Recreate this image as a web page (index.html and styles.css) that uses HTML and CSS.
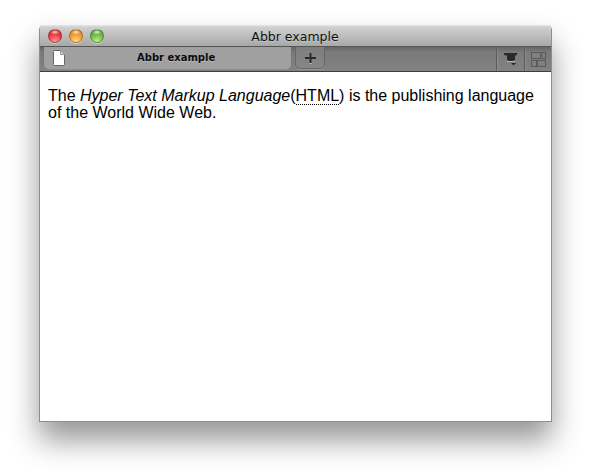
FILE: index.html
```html
<!DOCTYPE html>
<html lang="en">
<head>
<meta charset="utf-8">
<title>Abbr example</title>
<link rel="stylesheet" href="styles.css">
</head>
<body>
<div class="window">
  <header class="titlebar">
    <div class="lights">
      <span class="light red"></span>
      <span class="light yellow"></span>
      <span class="light green"></span>
    </div>
    <div class="title">Abbr example</div>
  </header>
  <nav class="tabbar">
    <div class="tab">
      <svg class="page-icon" width="12" height="16" viewBox="0 0 12 16"><path d="M1.500.5h6l4 4v10a1 1 0 0 1-1 1h-9a1 1 0 0 1-1-1V1.500a1 1 0 0 1 1-1z" fill="#fff" stroke="#666"/><path d="M7.500.5v4h4" fill="#d8d8d8" stroke="#999"/></svg>
      <span class="tab-label">Abbr example</span>
    </div>
    <div class="new-tab">
      <svg width="11" height="12" viewBox="0 0 11 12"><path d="M4.500 1h2v10h-2zM0 5h11v2H0z" fill="#2b2b2b"/><path d="M4.500 11h2v1h-2z" fill="#c4c4c4"/></svg>
    </div>
    <div class="spacer"></div>
    <div class="tool">
      <svg width="14" height="13" viewBox="0 0 14 13"><path d="M0 0h13v2l-2 .5V7l-2 1H5L3 7V2.500L0 2z" fill="#2a2a2a"/><path d="M3 8.500h8" stroke="#b5b5b5"/><path d="M7 10h5l-2.500 2.500z" fill="#2a2a2a"/></svg>
    </div>
    <div class="tool tool-last">
      <svg width="15" height="15" viewBox="0 0 15 15" fill="#808080" stroke="#5a5a5a"><rect x=".5" y=".5" width="9" height="6"/><rect x="11" y=".5" width="3.500" height="6"/><rect x=".5" y="8.500" width="5" height="6"/><rect x="6.500" y="8.500" width="8" height="6"/></svg>
    </div>
  </nav>
  <main class="content">
    <p class="text">The <cite>Hyper Text Markup Language</cite>(<abbr>HTML</abbr>) is the publishing language of the World Wide Web.</p>
  </main>
</div>
</body>
</html>
```
FILE: styles.css
```css
html, body {
  margin: 0;
  padding: 0;
  background: #fff;
  height: 476px;
  overflow: hidden;
}
body {
  padding: 25px 0 0 39px;
  box-sizing: border-box;
}
.window {
  width: 513px;
  height: 397px;
  display: flex;
  flex-direction: column;
  box-sizing: border-box;
  border: 1px solid #8e8e8e;
  border-top: 0;
  border-radius: 5px 5px 0 0;
  background: #fff;
  box-shadow: 0 18px 30px rgba(0, 0, 0, 0.42);
}
.titlebar {
  height: 21px;
  flex: none;
  display: flex;
  align-items: center;
  position: relative;
  background: linear-gradient(#e8e8e8 0, #d0d0d0 2px, #a8a8a8 100%);
  border-radius: 5px 5px 0 0;
}
.lights {
  display: flex;
  gap: 7px;
  padding: 1px 0 0 8px;
}
.light {
  width: 14px;
  height: 14px;
  border-radius: 50%;
  box-sizing: border-box;
  border: 1px solid rgba(0, 0, 0, 0.25);
  box-shadow: 0 1px 0 rgba(255, 255, 255, 0.45);
}
.red {
  background: radial-gradient(ellipse 5px 2.500px at 50% 18%, #ffc8c8 0, rgba(255, 200, 200, 0) 100%),
    radial-gradient(circle at 50% 95%, #ff9c9c 0, #ee3c46 55%, #c4202c 100%);
}
.yellow {
  background: radial-gradient(ellipse 5px 2.500px at 50% 18%, #ffe4b8 0, rgba(255, 228, 184, 0) 100%),
    radial-gradient(circle at 50% 95%, #ffe08e 0, #f29a30 55%, #c87420 100%);
}
.green {
  background: radial-gradient(ellipse 5px 2.500px at 50% 18%, #d8f2c0 0, rgba(216, 242, 192, 0) 100%),
    radial-gradient(circle at 50% 95%, #c4ee90 0, #72b948 55%, #4c9434 100%);
}
.title {
  position: absolute;
  left: -1px;
  right: 0;
  top: 3px;
  text-align: center;
  font: 12.500px/17px "DejaVu Sans", sans-serif;
  color: #111;
  text-shadow: 0 1px 0 rgba(255, 255, 255, 0.3);
}
.tabbar {
  height: 26px;
  flex: none;
  box-sizing: border-box;
  display: flex;
  align-items: stretch;
  padding-left: 4px;
  background: linear-gradient(#666, #7a7a7a 20%, #828282);
  border-top: 1px solid #565656;
  border-bottom: 1px solid #3f3f3f;
}
.tab {
  width: 247px;
  height: 22px;
  display: flex;
  align-items: center;
  box-sizing: border-box;
  padding-left: 9px;
  background: #a0a0a0;
  border-radius: 0 0 5px 5px;
  box-shadow: 0 1px 0 #8c8c8c, 0 0 1px #555;
}
.page-icon {
  flex: none;
}
.tab-label {
  margin-left: 72px;
  font: bold 10px/14px "DejaVu Sans", sans-serif;
  color: #0c0c0c;
  text-shadow: 0 1px 0 rgba(255, 255, 255, 0.25);
}
.new-tab {
  width: 30px;
  height: 22px;
  box-sizing: border-box;
  margin-left: 4px;
  display: flex;
  align-items: center;
  justify-content: center;
  background: linear-gradient(#7e7e7e, #868686);
  border: 1px solid #666;
  border-top: 0;
  border-radius: 0 0 5px 5px;
  box-shadow: 0 1px 0 #989898;
}
.spacer {
  flex: 1;
}
.tool {
  width: 28px;
  display: flex;
  align-items: center;
  justify-content: center;
  box-sizing: border-box;
  border-left: 1px solid #5a5a5a;
  box-shadow: inset 1px 0 0 rgba(255, 255, 255, 0.12);
}
.tool-last {
  width: 27px;
}
.content {
  flex: 1;
  padding: 15px 8px 0;
}
.text {
  margin: 0;
  font: 16px/17px "Liberation Sans", Arial, sans-serif;
  color: #000;
}
.text cite {
  font-style: italic;
}
.text abbr {
  border-bottom: 1px dotted #000;
}
```
